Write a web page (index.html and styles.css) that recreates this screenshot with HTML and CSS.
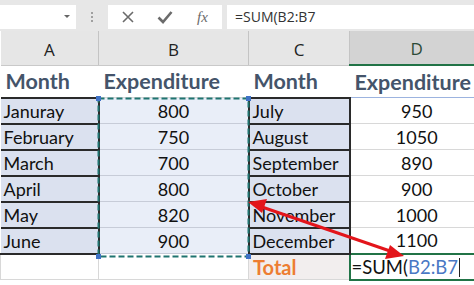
FILE: index.html
```html
<!DOCTYPE html>
<html lang="en">
<head>
    <meta charset="UTF-8" />
    <title>SUM across a range</title>
    <link rel="stylesheet" href="styles.css">
</head>
<body>

<!-- Строка формул -->
<div class="toolbar">
    <div class="namebox"><span class="caret"></span></div>
    <div class="grip"><i></i><i></i><i></i></div>
    <div class="fbuttons">
        <svg class="fbtn" width="14" height="14" viewBox="0 0 14 14">
            <path d="M2 2 L12 12 M12 2 L2 12" stroke="#6b6b6b" stroke-width="1.6" fill="none"/>
        </svg>
        <svg class="fbtn" width="16" height="14" viewBox="0 0 16 14">
            <path d="M1.5 7.5 L6 12 L14.5 2" stroke="#6b6b6b" stroke-width="2.6" fill="none"/>
        </svg>
        <span class="fx">fx</span>
    </div>
    <div class="formula">=SUM(B2:B7</div>
</div>

<!-- Лист -->
<div class="sheet">
    <table class="grid">
        <colgroup>
            <col class="col-a">
            <col class="col-b">
            <col class="col-c">
            <col class="col-d">
        </colgroup>
        <tr class="letters">
            <th>A</th><th>B</th><th>C</th><th class="active-col">D</th>
        </tr>
        <tr class="titles">
            <td class="title">Month</td>
            <td class="title">Expenditure</td>
            <td class="title">Month</td>
            <td class="title title-d">Expenditure</td>
        </tr>
        <tr>
            <td class="month">Januray</td><td class="amount in-range">800</td>
            <td class="month">July</td><td class="amount">950</td>
        </tr>
        <tr>
            <td class="month">February</td><td class="amount in-range">750</td>
            <td class="month">August</td><td class="amount">1050</td>
        </tr>
        <tr>
            <td class="month">March</td><td class="amount in-range">700</td>
            <td class="month">September</td><td class="amount">890</td>
        </tr>
        <tr>
            <td class="month">April</td><td class="amount in-range">800</td>
            <td class="month">October</td><td class="amount">900</td>
        </tr>
        <tr>
            <td class="month">May</td><td class="amount in-range">820</td>
            <td class="month">November</td><td class="amount">1000</td>
        </tr>
        <tr>
            <td class="month">June</td><td class="amount in-range">900</td>
            <td class="month">December</td><td class="amount">1100</td>
        </tr>
        <tr class="total-row">
            <td class="empty"></td><td class="empty"></td>
            <td class="total">Total</td>
            <td class="editing">=SUM(<span class="ref">B2:B7</span><span class="cursor"></span></td>
        </tr>
    </table>

    <!-- Рамка копирования и стрелка поверх листа -->
    <svg class="overlay" width="474" height="254" viewBox="0 0 474 254">
        <rect x="98.5" y="67.5" width="150" height="158" fill="none"
              stroke="#1f7470" stroke-width="2" stroke-dasharray="6 3"/>
        <rect x="96" y="65" width="5" height="5" fill="#3f72c6"/>
        <rect x="96" y="223" width="5" height="5" fill="#3f72c6"/>
        <rect x="246" y="65" width="5" height="5" fill="#3f72c6"/>
        <rect x="246" y="223" width="5" height="5" fill="#3f72c6"/>

        <line x1="262" y1="176" x2="390" y2="220" stroke="#e3151b" stroke-width="3"/>
        <polygon points="248,171 267,168 262,182" fill="#e3151b"/>
        <polygon points="404,225 385,228 390,214" fill="#e3151b"/>
    </svg>
</div>

</body>
</html>
```

FILE: styles.css
```css
body {
    margin: 0;
    padding: 0;
    width: 474px;
    height: 285px;
    overflow: hidden;
    background: #fff;
    font-family: Lato, "Open Sans", sans-serif;
    color: #111;
}

/* Строка формул */
.toolbar {
    height: 31px;
    background: #e7e7e7;
    display: flex;
    align-items: flex-start;
    padding-top: 5px;
    box-sizing: border-box;
}

.namebox {
    width: 76px;
    height: 24px;
    background: #fff;
    position: relative;
}

.caret {
    position: absolute;
    right: 6px;
    top: 10px;
    border-left: 3px solid transparent;
    border-right: 3px solid transparent;
    border-top: 3px solid #666;
}

.grip {
    width: 32px;
    height: 24px;
    display: flex;
    flex-direction: column;
    align-items: center;
    justify-content: center;
    gap: 2px;
}

.grip i {
    width: 2px;
    height: 2px;
    background: #a0a0a0;
}

.fbuttons {
    width: 114px;
    height: 24px;
    background: #fff;
    display: flex;
    align-items: center;
    padding-left: 13px;
    box-sizing: border-box;
    gap: 22px;
}

.fx {
    font-family: "Liberation Serif", serif;
    font-style: italic;
    font-size: 15px;
    color: #6b6b6b;
    margin-left: 2px;
}

.formula {
    flex: 1;
    height: 24px;
    margin-left: 5px;
    background: #fff;
    font-family: "Open Sans", sans-serif;
    font-size: 14px;
    line-height: 23px;
    padding-left: 8px;
    color: #333;
}

/* Лист */
.sheet {
    position: relative;
}

.grid {
    border-collapse: collapse;
    table-layout: fixed;
    width: 483px;
}

.col-a { width: 98px; }
.col-b { width: 150px; }
.col-c { width: 101px; }
.col-d { width: 134px; }

.letters th {
    height: 29px;
    padding: 0 0 4px 0;
    vertical-align: bottom;
    background: #e6e6e6;
    font-family: "Open Sans", sans-serif;
    font-weight: 400;
    font-size: 17px;
    color: #222;
    border-left: 1px solid #c4c4c4;
    border-bottom: 1px solid #c9c9c9;
}

.letters th:first-child {
    border-left: none;
}

.letters .active-col {
    background: #d3d3d3;
    color: #2c4a36;
    border-bottom: 2px solid #217346;
}

td {
    padding: 0 4px;
    height: 24px;
    font-size: 18px;
    white-space: nowrap;
    overflow: hidden;
    border: 1px solid #d8d8d8;
}

.titles td {
    height: 31px;
    background: #fff;
    border-top: none;
    border-left: none;
    border-right: none;
}

.title {
    font-weight: 700;
    font-size: 21.5px;
    color: #44546a;
    padding-left: 5px;
}

.title-d {
    border-bottom: 1px solid #9cb3df;
}

.month {
    background: #dbe1ef;
    border: 2px solid #2a2a2a;
    padding-left: 3px;
}

.grid tr td.month:first-child {
    border-left: none;
}

.amount {
    text-align: center;
}

.in-range {
    background: #e9eef8;
    border-color: #c7ccd8;
}

.empty {
    border-top: none;
}

.total {
    background: #f2eeee;
    color: #ed7d31;
    font-weight: 700;
    font-size: 20px;
    padding-left: 4px;
}

.editing {
    border: 2px solid #217346;
    font-size: 18.5px;
    padding-left: 1px;
    color: #111;
}

.ref {
    color: #4a78c4;
}

.cursor {
    display: inline-block;
    width: 1px;
    height: 19px;
    background: #222;
    vertical-align: -3px;
    margin-left: 1px;
}

.overlay {
    position: absolute;
    top: 0;
    left: 0;
    pointer-events: none;
}
```
